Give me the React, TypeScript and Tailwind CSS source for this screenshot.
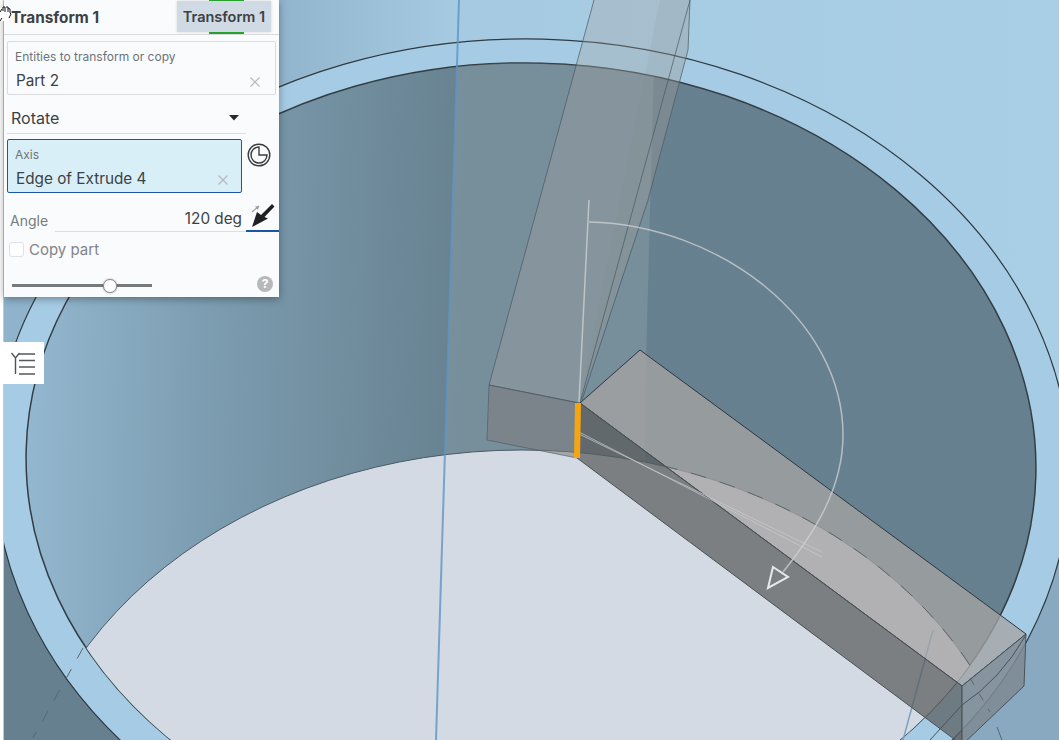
const font = { fontFamily: '"Inter", "Liberation Sans", sans-serif' };

function XIcon({ className }: { className: string }) {
  return (
    <svg width="10" height="10" viewBox="0 0 10 10" className={className}>
      <path d="M0.5 0.5 L9.5 9.5 M9.5 0.5 L0.5 9.5" stroke="#b4b9bd" strokeWidth="1.2" fill="none" />
    </svg>
  );
}

function Scene() {
  return (
    <svg width="1059" height="740" viewBox="0 0 1059 740" className="absolute inset-0 block">
      <defs>
        <linearGradient id="sky" x1="0" x2="1" y1="0" y2="0">
          <stop offset="0.25" stopColor="#8fb3cb" />
          <stop offset="0.43" stopColor="#a5cae1" />
          <stop offset="1" stopColor="#a9cfe7" />
        </linearGradient>
        <linearGradient id="wall" gradientUnits="userSpaceOnUse" x1="27" x2="1036" y1="0" y2="0">
          <stop offset="0" stopColor="#93b7cf" />
          <stop offset="0.18" stopColor="#7c9cb0" />
          <stop offset="0.43" stopColor="#67818f" />
          <stop offset="1" stopColor="#67808f" />
        </linearGradient>
        <clipPath id="innerClip">
          <ellipse cx="531" cy="463" rx="505" ry="400" transform="rotate(1.5 531 463)" />
        </clipPath>
        <clipPath id="topFace">
          <polygon points="640,350 1026,634 962,686 580,403" />
        </clipPath>
      </defs>
      <rect width="1059" height="740" fill="url(#sky)" />
      <polygon points="0,530 120,740 0,740" fill="#67808f" />
      <polygon points="1059,540 1059,740 900,740" fill="#88a9bf" />
      <ellipse cx="532" cy="468" rx="538" ry="429" transform="rotate(1.5 532 468)" fill="#a6cce5" stroke="#2f3a42" strokeWidth="1.2" />
      <ellipse cx="531" cy="463" rx="505" ry="400" transform="rotate(1.5 531 463)" fill="url(#wall)" stroke="#333d44" strokeWidth="1.5" />
      <g clipPath="url(#innerClip)">
        <polygon points="459,0 655,0 654,64 645,400 645,740 436,740" fill="#ffffff" fillOpacity="0.11" />
        <ellipse cx="522" cy="850" rx="505" ry="400" fill="#d3dae3" stroke="#4c5a63" strokeWidth="1" />
      </g>
      <line x1="459" y1="0" x2="436" y2="740" stroke="#5f93c4" strokeOpacity="0.8" strokeWidth="2" />
      <line x1="933" y1="630" x2="903" y2="740" stroke="#7f9fc4" strokeWidth="1.5" />
      <path d="M83 648 L33 738" stroke="#5a666e" strokeWidth="1" strokeDasharray="12 12" fill="none" />
      <path d="M997 727 L1002 740" stroke="#5a666e" strokeWidth="1" fill="none" />

      {/* ghost part */}
      <polygon points="594,0 690,0 688,50 648,200 580,403 489,385" fill="#a9a5a2" fillOpacity="0.32" stroke="none" />
      <polygon points="660,0 690,0 688,50 648,200 580,403 600,300" fill="#7a7d80" fillOpacity="0.1" />
      <path d="M594 0 L489 385 L580 403 L690 0 M690 0 L688 50 L648 200 L582 400" stroke="#4a5861" strokeOpacity="0.7" strokeWidth="1" fill="none" />
      <polygon points="489,385 578,403 577,458 487,440" fill="#7d7c7b" fillOpacity="0.55" stroke="#4a5861" strokeOpacity="0.6" strokeWidth="1" />

      {/* rotated part */}
      <polygon points="640,350 1026,634 962,686 580,403" fill="rgb(165,163,163)" fillOpacity="0.76" stroke="#2e373d" strokeWidth="1" strokeLinejoin="round" />
      <g clipPath="url(#topFace)">
        <ellipse cx="522" cy="850" rx="505" ry="400" fill="none" stroke="#5d666c" strokeWidth="1" strokeDasharray="16 14" />
      </g>
      <polygon points="580,403 962,686 962,745 577,458" fill="rgb(90,92,92)" fillOpacity="0.72" stroke="#4a5258" strokeWidth="1" />
      <polygon points="962,686 1026,634 1024,686 962,745" fill="#7f8a92" fillOpacity="0.85" stroke="#4a5258" strokeWidth="1" />
      <path d="M1026 635 Q1000 680 962 705 L930 740" stroke="#4a5258" strokeWidth="1" fill="none" />
      <path d="M970 678 L990 712" stroke="#5d666c" strokeWidth="1" strokeDasharray="8 10" fill="none" />

      {/* manipulator */}
      <path d="M589 200 L579 402" stroke="#d0d3d5" strokeOpacity="0.75" strokeWidth="1.5" fill="none" />
      <path d="M589 222 C720 225 843 320 843 435 C843 490 812 536 783 572" stroke="#d0d3d5" strokeOpacity="0.75" strokeWidth="1.5" fill="none" />
      <polygon points="773,567 788,577 768,588" fill="none" stroke="#e6e8ea" strokeWidth="2" />
      <path d="M579 432 L822 557 M579 434 L822 552" stroke="#c9ccce" strokeOpacity="0.7" strokeWidth="1" fill="none" />
      <polygon points="575,403 581,403 580,458 574,458" fill="#f4a511" />
    </svg>
  );
}

function Cursor() {
  return (
    <svg width="12" height="18" viewBox="0 0 12 18" className="absolute left-0 top-[5px]">
      <path d="M0 5 L2 3 L3 5 L3 2 L5 2 L6 1 L7 2 L8 2 L9 3 L9 4 L11 5 L11 9 L9 13 L9 16 L1 16 L0 14 Z" fill="#ffffff" />
      <path d="M0 7 L2 4 M3 6 L3 2 L5 2 M5 2 L5 7 M6 2 L8 2 L8 7 M8 3 L10 4 L10 8 L11 9 L9 13 M2 13 L0 16" stroke="#111" strokeWidth="1" fill="none" />
    </svg>
  );
}

export default function App() {
  return (
    <div className="relative h-[740px] w-[1059px] overflow-hidden bg-white" style={font}>
      <Scene />
      <div className="absolute left-0 top-0 h-[740px] w-[4px] border-r border-[#c9c9c9] bg-white" />
      <div className="absolute left-[4px] top-0 flex h-[297px] w-[275px] flex-col bg-[#fafbfd] shadow-[0_2px_8px_rgba(0,0,0,0.35)]">
        <div className="flex h-[35px] shrink-0 items-start justify-between border-b border-[#d9dbde] pl-[7px] pr-[8px] pt-[1px]">
          <span className="text-[15.3px] font-bold leading-[33px] text-[#3c4145]">Transform 1</span>
          <div className="relative flex h-[31px] w-[94px] items-center justify-center bg-[#d0dae4] pt-[1px] shadow-[0_0_3px_rgba(0,0,0,0.15)]">
            <span className="text-[14.5px] font-semibold text-[#3c4145]">Transform 1</span>
            <span className="absolute -top-[1px] left-[32px] h-[1px] w-[35px] bg-[#27a02c]" />
            <span className="absolute -bottom-[2px] left-[32px] h-[2px] w-[35px] bg-[#27a02c]" />
          </div>
        </div>
        <div className="mx-[3px] mt-[6px] h-[54px] shrink-0 rounded-[2px] border border-[#d9dbdf] px-[7px] pt-[7px]">
          <div className="text-[12px] leading-[16px] text-[#6b737a]">Entities to transform or copy</div>
          <div className="mt-[6px] flex items-center justify-between pl-[1px] pr-[8px] text-[15.3px] leading-[20px] text-[#3c4145]">
            <span>Part 2</span>
            <XIcon className="mt-[2px]" />
          </div>
        </div>
        <div className="ml-[3px] mr-[33px] mt-[12px] flex h-[27px] shrink-0 items-start justify-between border-b border-[#dcdfe2] pl-[4px] pr-[7px] text-[16px] leading-[22px] text-[#3c4145]">
          <span>Rotate</span>
          <svg width="10" height="6" viewBox="0 0 10 6" className="mt-[8px]"><path d="M0 0 H10 L5 5.5 Z" fill="#26292c" /></svg>
        </div>
        <div className="mt-[5px] flex shrink-0 items-start">
          <div className="ml-[3px] h-[54px] w-[235px] rounded-[2px] border border-[#1c55a5] bg-[#d9eff8] px-[7px] pt-[7px]">
            <div className="text-[12px] leading-[16px] text-[#6b737a]">Axis</div>
            <div className="mt-[6px] flex items-center justify-between pl-[1px] pr-[6px] text-[15.3px] leading-[20px] text-[#3c4145]">
              <span>Edge of Extrude 4</span>
              <XIcon className="mt-[2px]" />
            </div>
          </div>
          <svg width="24" height="24" viewBox="0 0 24 24" className="ml-[5px] mt-[4px]">
            <circle cx="12" cy="12" r="10.8" fill="none" stroke="#3a3d40" strokeWidth="1.4" />
            <path d="M12 4 A8 8 0 1 0 20 12 L12 12 Z" fill="none" stroke="#3a3d40" strokeWidth="1.4" />
          </svg>
        </div>
        <div className="mt-[4px] flex h-[35px] shrink-0 items-end">
          <span className="mb-[1px] ml-[6px] w-[45px] text-[14px] leading-[20px] text-[#767b80]">Angle</span>
          <div className="h-[28px] w-[191px] border-b border-[#dcdfe2] pr-[4px] pt-[5px] text-right text-[15.3px] leading-[20px] text-[#3c4145]">120 deg</div>
          <div className="relative h-[29px] w-[33px] border-b-2 border-[#1c55a5]">
            <svg width="26" height="26" viewBox="0 0 26 26" className="absolute left-[4px] top-0">
              <path d="M2 9 L9 3" stroke="#9a9fa3" strokeWidth="1.2" fill="none" />
              <path d="M9 3 L5 3.5 L8 7 Z" fill="#9a9fa3" />
              <path d="M2 24 L7 9 L11 12 L22 1 L24.5 3.5 L14.5 14 L18 15.5 Z" fill="#1e2022" />
            </svg>
          </div>
        </div>
        <div className="ml-[5px] mt-[10px] flex h-[15px] shrink-0 items-center gap-[5px]">
          <span className="h-[15px] w-[15px] rounded-[3px] border border-[#dfe0e3] bg-white" />
          <span className="text-[15px] leading-[20px] text-[#808488]">Copy part</span>
        </div>
        <div className="ml-[8px] mr-[6px] mt-[20px] flex h-[17px] shrink-0 items-center justify-between">
          <div className="relative h-[3px] w-[140px] bg-[#777a7c]">
            <span className="absolute -top-[5.5px] left-[91px] h-[14px] w-[14px] rounded-full border border-[#8a8d90] bg-white shadow-[0_0_2px_rgba(0,0,0,0.4)]" />
          </div>
          <span className="-mt-[4px] flex h-[16px] w-[16px] items-center justify-center rounded-full bg-[#b7b8b9] text-[12px] font-bold leading-none text-white">?</span>
        </div>
      </div>
      <Cursor />
      <div className="absolute left-[3px] top-[342px] flex h-[42px] w-[41px] items-center justify-center bg-white">
        <svg width="26" height="24" viewBox="0 0 26 24">
          <path d="M0.5 2 L4.5 7 L8.5 2 M4.5 7 V23" stroke="#4d5256" strokeWidth="1.4" fill="none" />
          <path d="M8 3 H24 M8 9.5 H24 M8 16 H24 M8 23 H24" stroke="#55595d" strokeWidth="1.3" fill="none" />
        </svg>
      </div>
    </div>
  );
}
